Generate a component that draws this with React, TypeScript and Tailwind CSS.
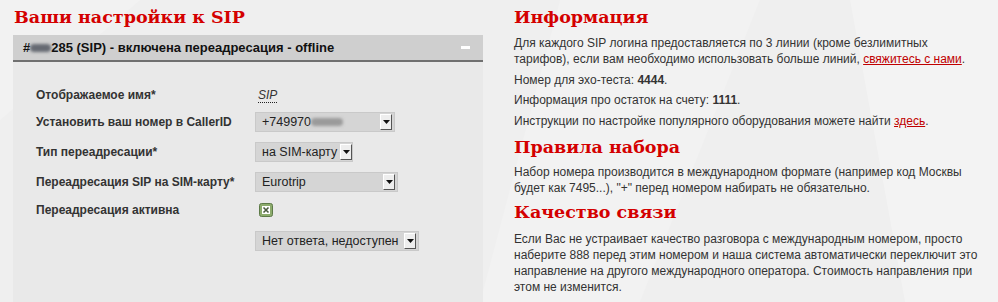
import React from "react";

const sans = { fontFamily: '"Liberation Sans", Arial, sans-serif' };
const serif = { fontFamily: '"DejaVu Serif", "Liberation Serif", serif' };

function Blur({ w, c = "#8a8a8a" }: { w: number; c?: string }) {
  return (
    <span className="relative inline-block align-middle" style={{ width: w, height: 8 }}>
      <span className="absolute inset-0 rounded-full blur-[1.5px]" style={{ background: c }} />
    </span>
  );
}

function Select({ w, children }: { w: number; children: React.ReactNode }) {
  return (
    <div
      className="flex h-[20px] items-center justify-between gap-[3px] border border-[#c9c9c9] bg-[#d5d5d5] pl-[6px] pr-[2px] text-[12.5px] text-[#222]"
      style={{ width: w }}
    >
      <span className="flex items-center whitespace-nowrap leading-none">{children}</span>
      <span className="flex h-[16px] w-[12px] shrink-0 items-center justify-center border-t border-l border-t-[#ffffff] border-l-[#ffffff] border-r border-b border-r-[#555] border-b-[#555] bg-[#eeeeee]">
        <svg width="7" height="4" viewBox="0 0 7 4">
          <path d="M0 0h7L3.5 4z" fill="#111" />
        </svg>
      </span>
    </div>
  );
}

function Row({ label, children, mt }: { label?: string; children: React.ReactNode; mt: string }) {
  return (
    <div className={`flex h-[22px] items-center ${mt}`}>
      <div className="w-[219px] shrink-0 text-[12px] font-bold text-[#333]">{label}</div>
      <div className="flex items-center">{children}</div>
    </div>
  );
}

export default function App() {
  return (
    <div
      className="relative h-[302px] w-[998px] overflow-hidden bg-[#efefef]"
      style={sans}
    >
      <svg className="absolute inset-0" width="998" height="302" viewBox="0 0 998 302">
        <polygon points="560,0 760,0 640,302 480,302" fill="#ffffff" opacity="0.18" />
        <polygon points="850,0 998,0 998,302 905,302" fill="#ffffff" opacity="0.25" />
        <polygon points="0,0 140,0 0,120" fill="#ffffff" opacity="0.2" />
      </svg>
      <div className="relative flex">
        <div className="ml-[13px] w-[470px] shrink-0">
          <h1
            className="mt-[5px] mb-[6px] h-[24px] pl-[1px] text-[17.5px] font-bold leading-[24px] text-[#d40000]"
            style={serif}
          >
            Ваши настройки к SIP
          </h1>
          <div className="h-[267px] bg-[#e9e9e9]">
            <div className="flex h-[27px] items-center justify-between border-b-2 border-[#707070] bg-[#cfcfcf] pl-[10px] pr-[13px]">
              <span className="flex items-center text-[13px] font-bold text-[#111]">
                #<Blur w={21} c="#666a72" />
                285 (SIP) - включена переадресация - offline
              </span>
              <span className="block h-[3px] w-[9px] bg-white" />
            </div>
            <div className="pl-[23px]">
              <Row label="Отображаемое имя*" mt="mt-[22px]">
                <span className="ml-[3px] border-b border-dotted border-[#222] text-[12px] italic leading-[14px] text-[#333]">
                  SIP
                </span>
              </Row>
              <Row label="Установить ваш номер в CallerID" mt="mt-[5px]">
                <Select w={140}>
                  +749970
                  <Blur w={32} c="#9a9a9a" />
                </Select>
              </Row>
              <Row label="Тип переадресации*" mt="mt-[8px]">
                <Select w={98}>на SIM-карту</Select>
              </Row>
              <Row label="Переадресация SIP на SIM-карту*" mt="mt-[8px]">
                <Select w={143}>Eurotrip</Select>
              </Row>
              <Row label="Переадресация активна" mt="mt-[6px]">
                <svg className="ml-[4px]" width="14" height="14" viewBox="0 0 14 14">
                  <rect x="0.5" y="0.5" width="13" height="13" rx="2" fill="#8cab6c" stroke="#5d7a48" />
                  <rect x="3" y="3" width="8" height="8" fill="#ffffff" />
                  <path d="M4.5 4.5l5 5M9.5 4.5l-5 5" stroke="#4a5a3e" strokeWidth="1.6" />
                </svg>
              </Row>
              <Row mt="mt-[9px]">
                <Select w={164}>Нет ответа, недоступен</Select>
              </Row>
            </div>
          </div>
        </div>
        <div className="ml-[31px] w-[470px] text-[12px] leading-[16px] text-[#333]">
          <h2
            className="mt-[5px] mb-[6px] h-[24px] text-[17.5px] font-bold leading-[24px] text-[#d40000]"
            style={serif}
          >
            Информация
          </h2>
          <p className="mb-[5px]">
            Для каждого SIP логина предоставляется по 3 линии (кроме безлимитных тарифов), если вам
            необходимо использовать больше линий,{" "}
            <span className="text-[#c00000] underline">свяжитесь с нами</span>.
          </p>
          <p className="mb-[4px]">
            Номер для эхо-теста: <b>4444</b>.
          </p>
          <p className="mb-[5px]">
            Информация про остаток на счету: <b>1111</b>.
          </p>
          <p className="mb-[6px]">
            Инструкции по настройке популярного оборудования можете найти{" "}
            <span className="text-[#c00000] underline">здесь</span>.
          </p>
          <h2
            className="mb-[5px] h-[24px] text-[17.5px] font-bold leading-[24px] text-[#d40000]"
            style={serif}
          >
            Правила набора
          </h2>
          <p className="mb-[4px]">
            Набор номера производится в международном формате (например код Москвы будет как
            7495...), "+" перед номером набирать не обязательно.
          </p>
          <h2
            className="mb-[7px] h-[24px] text-[17.5px] font-bold leading-[24px] text-[#d40000]"
            style={serif}
          >
            Качество связи
          </h2>
          <p>
            Если Вас не устраивает качество разговора с международным номером, просто наберите 888
            перед этим номером и наша система автоматически переключит это направление на другого
            международного оператора. Стоимость направления при этом не изменится.
          </p>
        </div>
      </div>
    </div>
  );
}
